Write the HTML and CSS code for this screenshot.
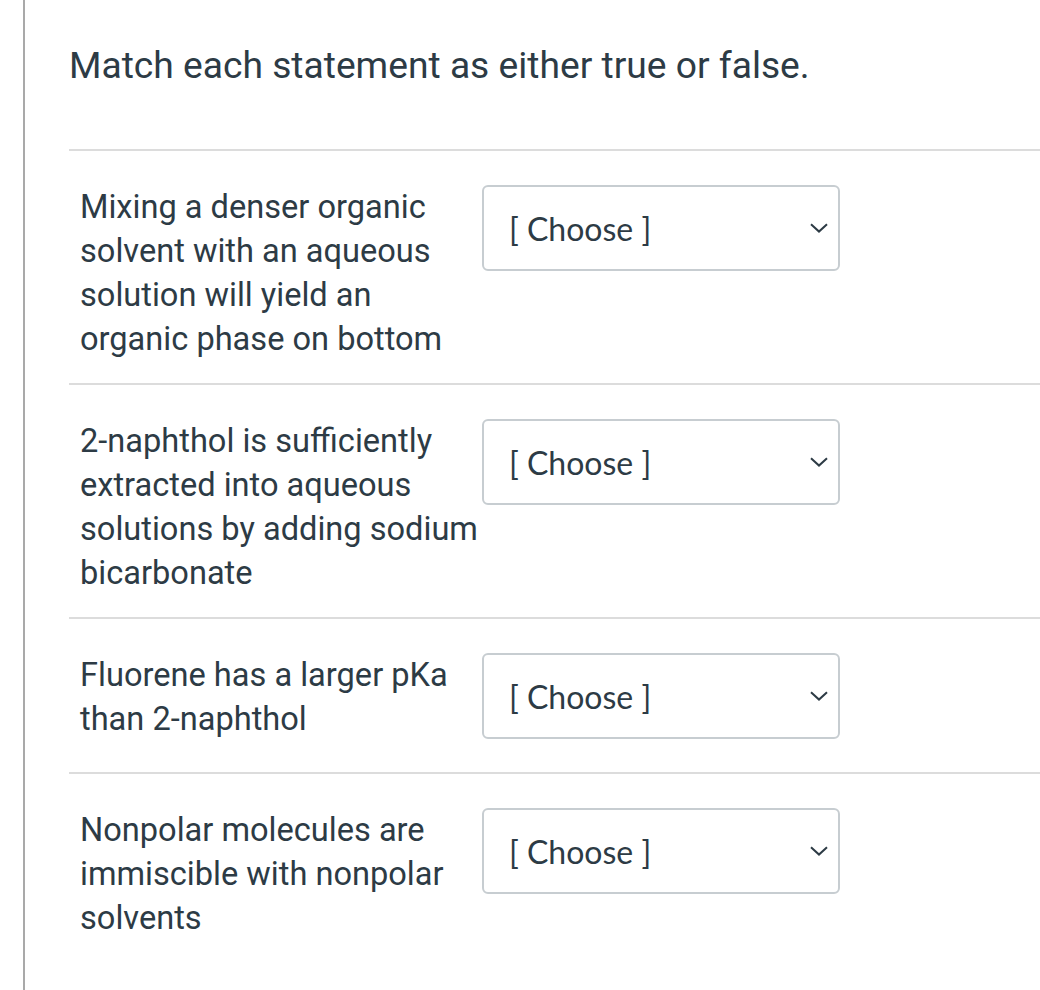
FILE: index.html
```html
<!DOCTYPE html>
<html lang="en">
<head>
<meta charset="utf-8">
<title>Match each statement</title>
<link rel="stylesheet" href="styles.css">
</head>
<body>
<div class="page">
  <div class="question">
    <h1 class="title">Match each statement as either true or false.</h1>
    <div class="answers">
      <div class="row">
        <div class="stmt">Mixing a denser organic solvent with an aqueous solution will yield an organic phase on bottom</div>
        <div class="select"><span class="select-text">[ Choose ]</span><svg class="chev" width="18" height="10" viewBox="0 0 18 10"><path d="M1 1.2 L9 8.6 L17 1.2" fill="none" stroke="#2d3b45" stroke-width="2"/></svg></div>
      </div>
      <div class="row">
        <div class="stmt">2-naphthol is sufficiently extracted into aqueous solutions by adding sodium bicarbonate</div>
        <div class="select"><span class="select-text">[ Choose ]</span><svg class="chev" width="18" height="10" viewBox="0 0 18 10"><path d="M1 1.2 L9 8.6 L17 1.2" fill="none" stroke="#2d3b45" stroke-width="2"/></svg></div>
      </div>
      <div class="row">
        <div class="stmt">Fluorene has a larger pKa than 2-naphthol</div>
        <div class="select"><span class="select-text">[ Choose ]</span><svg class="chev" width="18" height="10" viewBox="0 0 18 10"><path d="M1 1.2 L9 8.6 L17 1.2" fill="none" stroke="#2d3b45" stroke-width="2"/></svg></div>
      </div>
      <div class="row">
        <div class="stmt">Nonpolar molecules are immiscible with nonpolar solvents</div>
        <div class="select"><span class="select-text">[ Choose ]</span><svg class="chev" width="18" height="10" viewBox="0 0 18 10"><path d="M1 1.2 L9 8.6 L17 1.2" fill="none" stroke="#2d3b45" stroke-width="2"/></svg></div>
      </div>
    </div>
  </div>
</div>
</body>
</html>
```
FILE: styles.css
```css
html, body {
  margin: 0;
  padding: 0;
  background: #ffffff;
}

body {
  color: #2d3b45;
  font-family: Roboto, "Liberation Sans", sans-serif;
  overflow: hidden;
}

.page {
  margin-left: 23px;
  border-left: 2px solid #a9a9a9;
  min-height: 990px;
  box-sizing: border-box;
  padding: 41px 0 0 44px;
}

.title {
  margin: 0 0 60px 0;
  font-size: 37.2px;
  line-height: 48px;
  font-weight: 400;
  color: #2d3b45;
}

.row {
  display: flex;
  align-items: flex-start;
  border-top: 2px solid #dcdcdc;
  padding: 34px 0 22px 11px;
}

.stmt {
  width: 402px;
  font-size: 32.6px;
  line-height: 44px;
}

.select {
  box-sizing: border-box;
  width: 358px;
  height: 86px;
  margin-bottom: 11px;
  border: 2px solid #c7cdd1;
  border-radius: 6px;
  display: flex;
  align-items: center;
  justify-content: space-between;
  padding: 0 10px 0 25px;
  font-family: Lato, "Liberation Sans", sans-serif;
  font-size: 32px;
  color: #2d3b45;
}

.chev {
  display: block;
}
```
